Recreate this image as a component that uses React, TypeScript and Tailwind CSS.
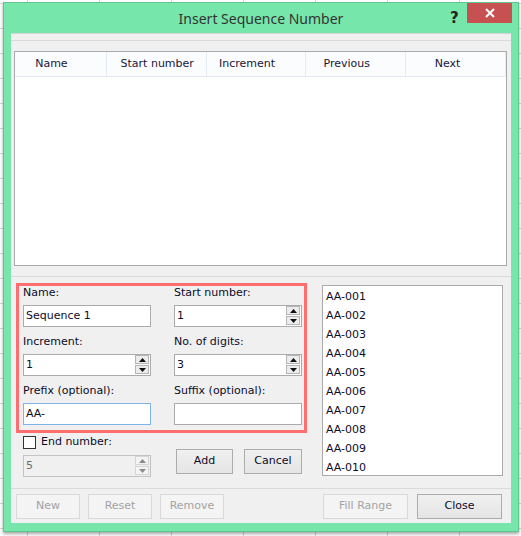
import React from 'react';

const font = "font-['DejaVu_Sans',sans-serif] text-[11px]";

const Arrow = ({ up, disabled }: { up: boolean; disabled?: boolean }) => (
  <svg width="7" height="4" viewBox="0 0 7 4">
    <path d={up ? 'M3.5 0 L7 4 L0 4 Z' : 'M0 0 L7 0 L3.5 4 Z'} fill={disabled ? '#8a8a8a' : '#111'} />
  </svg>
);

const SpinBox = ({ value, disabled }: { value: string; disabled?: boolean }) => (
  <div
    className={`flex h-[22px] w-[128px] border ${
      disabled ? 'border-[#c3c3c3] bg-[#f0f0f0] text-[#6d6d6d]' : 'border-[#ababab] bg-white text-[#0c0c28]'
    }`}
  >
    <div className="flex-1 pl-[2px] leading-[20px]">{value}</div>
    <div className="mr-[1px] flex w-[14px] flex-col gap-[1px]">
      {[true, false].map((up) => (
        <div
          key={String(up)}
          className={`flex h-[9px] items-center justify-center border ${
            disabled ? 'border-[#d5d5d5] bg-[#f4f4f4]' : 'border-[#b5b5b5] bg-[#ececec]'
          }`}
        >
          <Arrow up={up} disabled={disabled} />
        </div>
      ))}
    </div>
  </div>
);

const TextBox = ({ value, focused }: { value: string; focused?: boolean }) => (
  <div
    className={`h-[22px] w-[128px] border bg-white pl-[2px] leading-[20px] text-[#0c0c28] ${
      focused ? 'border-[#7eb4ea]' : 'border-[#ababab]'
    }`}
  >
    {value}
  </div>
);

const Button = ({ label, w, disabled }: { label: string; w: string; disabled?: boolean }) => (
  <div
    className={`flex h-[25px] items-center justify-center border ${w} ${
      disabled
        ? 'border-[#d9d9d9] bg-[#f4f4f4] text-[#a3a3a3]'
        : 'border-[#acacac] bg-gradient-to-b from-[#f0f0f0] to-[#e5e5e5] text-[#0c0c28]'
    }`}
  >
    {label}
  </div>
);

const Field = ({ label, children }: { label: string; children: React.ReactNode }) => (
  <div className="flex flex-col">
    <div className="h-[13px] leading-[13px] text-[#0c0c28]">{label}</div>
    <div className="mt-[6px]">{children}</div>
  </div>
);

// header text sits a little left of the column centre, as in the dialog
const columns = [
  { name: 'Name', cls: 'w-[92px] pr-[18px]' },
  { name: 'Start number', cls: 'w-[100px] pl-[2px]' },
  { name: 'Increment', cls: 'w-[100px] pr-[18px]' },
  { name: 'Previous', cls: 'w-[100px] pr-[18px]' },
  { name: 'Next', cls: 'w-[100px] pr-[16px]' },
];

const items = ['AA-001', 'AA-002', 'AA-003', 'AA-004', 'AA-005', 'AA-006', 'AA-007', 'AA-008', 'AA-009', 'AA-010'];

export default function App() {
  return (
    <div
      className={`h-[536px] w-[521px] overflow-hidden bg-white bg-[linear-gradient(to_right,#d6d6d6_1px,transparent_1px),linear-gradient(to_bottom,#d6d6d6_1px,transparent_1px)] bg-size-[72px_25px] bg-position-[27px_3px] pl-[3px] pt-[2px] ${font}`}
    >
      <div className="flex h-[530px] w-[516px] flex-col border border-[#5fc690] bg-[#76e6aa] shadow-[0_2px_3px_rgba(0,0,0,0.35)]">
        {/* title bar */}
        <div className="relative flex h-[30px] items-center justify-center">
          <span className="font-['Noto_Sans',sans-serif] text-[14px] text-[#333]">Insert Sequence Number</span>
          <span className="absolute left-[446px] top-[4px] text-[15px] font-bold text-[#222]">?</span>
          <div className="absolute left-[463px] top-0 flex h-[20px] w-[45px] items-center justify-center bg-[#c75050]">
            <svg width="10" height="10" viewBox="0 0 10 10">
              <path d="M1 1 L9 9 M9 1 L1 9" stroke="#fff" strokeWidth="2" />
            </svg>
          </div>
        </div>

        {/* client area */}
        <div className="ml-[7px] flex h-[490px] w-[500px] flex-col border-t border-[#d4d4d4] bg-[#f0f0f0]">
          <div className="h-[7px] border-b border-[#dadada]" />

          {/* list view */}
          <div className="border-b border-[#dadada] px-[3px] pb-[10px] pt-[10px]">
            <div className="h-[215px] w-[493px] border border-[#a9a9a9] bg-white">
              <div className="flex h-[25px] border-b border-[#e5ebf5] bg-[#fbfcfe]">
                {columns.map((c) => (
                  <div
                    key={c.name}
                    className={`${c.cls} flex items-center justify-center border-r border-[#e5ebf5] text-[#161638]`}
                  >
                    {c.name}
                  </div>
                ))}
              </div>
            </div>
          </div>

          {/* form */}
          <div className="flex h-[212px] border-b border-[#dadada] pl-[5px] pt-[6px]">
            <div className="flex w-[291px] flex-col">
              <div className="grid grid-cols-[128px_128px] gap-x-[23px] gap-y-[8px] border-[3px] border-[#ff6e6e] pb-[5px] pl-[4px]">
                <Field label="Name:">
                  <TextBox value="Sequence 1" />
                </Field>
                <Field label="Start number:">
                  <SpinBox value="1" />
                </Field>
                <Field label="Increment:">
                  <SpinBox value="1" />
                </Field>
                <Field label="No. of digits:">
                  <SpinBox value="3" />
                </Field>
                <Field label="Prefix (optional):">
                  <TextBox value="AA-" focused />
                </Field>
                <Field label="Suffix (optional):">
                  <TextBox value="" />
                </Field>
              </div>
              <div className="flex pl-[7px] pt-[3px]">
                <div className="flex flex-col">
                  <div className="flex h-[13px] items-center gap-[5px]">
                    <div className="h-[13px] w-[13px] border border-[#333] bg-white" />
                    <span className="text-[#0c0c28]">End number:</span>
                  </div>
                  <div className="mt-[6px]">
                    <SpinBox value="5" disabled />
                  </div>
                </div>
                <div className="ml-[25px] mt-[13px] flex gap-[11px]">
                  <Button label="Add" w="w-[57px]" />
                  <Button label="Cancel" w="w-[58px]" />
                </div>
              </div>
            </div>
            <div className="ml-[15px] mt-[2px] h-[191px] w-[181px] overflow-hidden border border-[#ababab] bg-white pl-[3px] pt-[1px] text-[#0c0c28]">
              {items.map((it) => (
                <div key={it} className="h-[19px] leading-[19px]">
                  {it}
                </div>
              ))}
            </div>
          </div>

          {/* bottom buttons */}
          <div className="flex items-center px-[5px] pt-[5px]">
            <div className="flex gap-[8px]">
              <Button label="New" w="w-[64px]" disabled />
              <Button label="Reset" w="w-[64px]" disabled />
              <Button label="Remove" w="w-[64px]" disabled />
            </div>
            <div className="ml-auto mr-[4px] flex gap-[9px]">
              <Button label="Fill Range" w="w-[85px]" disabled />
              <Button label="Close" w="w-[85px]" />
            </div>
          </div>
        </div>
      </div>
    </div>
  );
}
